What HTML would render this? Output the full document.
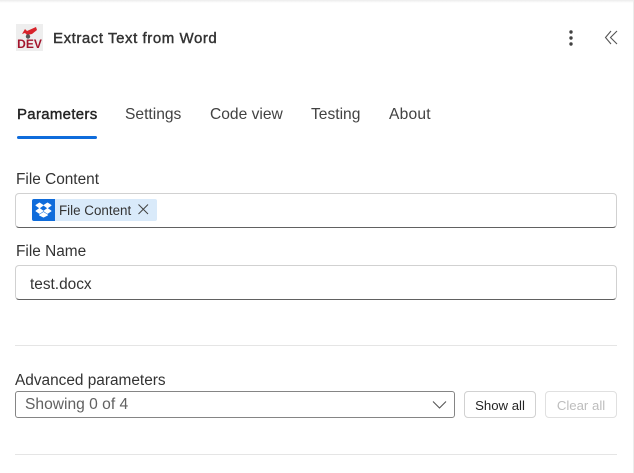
<!DOCTYPE html>
<html><head><meta charset="utf-8"><style>
html,body{margin:0;padding:0;background:#fff}
body{width:634px;height:473px;position:relative;overflow:hidden;font-family:"Liberation Sans",sans-serif;color:#242424}
.a{position:absolute;white-space:nowrap}
.t{font-size:15.6px;line-height:20px;top:105px;color:#424242}
.l{font-size:15.4px;line-height:20px;color:#333}
.box{position:absolute;box-sizing:border-box;background:#fff;border:1px solid #d1d1d1;border-bottom:1px solid #616161;border-radius:4px}
.hr{position:absolute;left:15px;width:602px;height:1px;background:#e5e5e5}
.btn{position:absolute;box-sizing:border-box;top:391px;height:27px;border:1px solid #d1d1d1;border-radius:4px;font-size:13.2px;line-height:27px;text-align:center;background:#fff}
</style></head><body>
<div class="a" style="left:0;top:0;width:634px;height:3px;background:linear-gradient(#ececec,#fff)"></div>
<div class="a" style="left:633px;top:0;width:1px;height:473px;background:#ececec"></div>
<div class="a" style="left:16px;top:24px;width:27px;height:27px;background:#eeeeee"></div>
<svg class="a" style="left:16px;top:24px" width="27" height="27" viewBox="0 0 27 27"><path d="M6 10 L9 5 L11 7 L20 3 L21 6 L16 10 L11 11 L9 9 Z" fill="#d8232a"/><circle cx="12" cy="12.500" r="2.200" fill="#555"/></svg>
<div class="a" style="left:16px;top:39px;width:27px;text-align:center;font-size:12px;line-height:11px;font-weight:bold;color:#a3152c">DEV</div>
<div class="a" style="left:53px;top:29px;font-size:15px;line-height:20px;color:#333;-webkit-text-stroke:.4px #333;letter-spacing:.56px">Extract Text from Word</div>
<svg class="a" style="left:564px;top:28px" width="14" height="20"><circle cx="7" cy="4" r="1.700" fill="#424242"/><circle cx="7" cy="10" r="1.700" fill="#424242"/><circle cx="7" cy="16" r="1.700" fill="#424242"/></svg>
<svg class="a" style="left:603px;top:29px" width="16" height="18" fill="none" stroke="#555" stroke-width="1.100"><path d="M8 2 L2.500 8.500 L8 15M14 2 L7.500 8.500 L14 15"/></svg>
<div class="a t" style="left:17px;color:#242424;font-size:15px;-webkit-text-stroke:.4px #242424;letter-spacing:.3px">Parameters</div>
<div class="a t" style="left:125px">Settings</div>
<div class="a t" style="left:210px">Code view</div>
<div class="a t" style="left:311px">Testing</div>
<div class="a t" style="left:389px;letter-spacing:.2px">About</div>
<div class="a" style="left:17px;top:136px;width:80px;height:3px;border-radius:2px;background:#0f6cdb"></div>
<div class="a l" style="left:16px;top:170px">File Content</div>
<div class="box" style="left:15px;top:193px;width:602px;height:35px"></div>
<div class="a" style="left:32px;top:199px;width:125px;height:22px;background:#d9eafa;border-radius:2px"></div>
<div class="a" style="left:32px;top:199px;width:23px;height:22px;background:#0f6cdb;border-radius:2px 0 0 2px"></div>
<svg class="a" style="left:34px;top:201px" width="19" height="18" viewBox="0 0 19 18" fill="#fff" stroke="#fff" stroke-width="1" stroke-linejoin="round"><path d="M5.500 2 L9 4.300 L5.500 6.800 L2 4.300Z M13.500 2 L17 4.300 L13.500 6.800 L10 4.300Z M5.500 7.500 L9 10 L5.500 12.300 L2 10Z M13.500 7.500 L17 10 L13.500 12.300 L10 10Z M5.500 14 L9.500 11.500 L13.500 14 L9.500 16Z"/></svg>
<div class="a" style="left:59px;top:201px;font-size:13.400px;line-height:20px;color:#333">File Content</div>
<svg class="a" style="left:137px;top:203px" width="13" height="13" fill="none" stroke="#424242" stroke-width="1"><path d="M1.500 1.500 L11 11 M11 1.500 L1.500 11"/></svg>
<div class="a l" style="left:16px;top:242px">File Name</div>
<div class="box" style="left:15px;top:265px;width:602px;height:35px"></div>
<div class="a" style="left:30px;top:275px;font-size:15.400px;line-height:20px;color:#333">test.docx</div>
<div class="hr" style="top:345px"></div>
<div class="a l" style="left:15px;top:371px">Advanced parameters</div>
<div class="box" style="left:15px;top:391px;width:440px;height:27px;border:1px solid #858585;border-radius:3px"></div>
<div class="a" style="left:25px;top:395px;font-size:15.600px;line-height:20px;color:#616161">Showing 0 of 4</div>
<svg class="a" style="left:432px;top:400px" width="15" height="10" fill="none" stroke="#555" stroke-width="1.100"><path d="M1 1.500 L7.500 8 L14 1.500"/></svg>
<div class="btn" style="left:464px;width:72px;color:#242424">Show all</div>
<div class="btn" style="left:545px;width:72px;color:#bdbdbd;border-color:#e0e0e0">Clear all</div>
<div class="hr" style="top:454px"></div>
</body></html>
